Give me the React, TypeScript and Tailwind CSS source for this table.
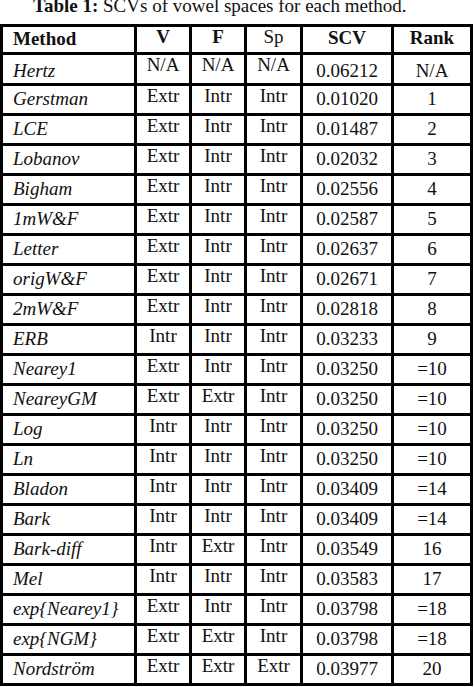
const ROWS: [string, string, string, string, string, string][] = [
  ["Hertz", "N/A", "N/A", "N/A", "0.06212", "N/A"],
  ["Gerstman", "Extr", "Intr", "Intr", "0.01020", "1"],
  ["LCE", "Extr", "Intr", "Intr", "0.01487", "2"],
  ["Lobanov", "Extr", "Intr", "Intr", "0.02032", "3"],
  ["Bigham", "Extr", "Intr", "Intr", "0.02556", "4"],
  ["1mW&F", "Extr", "Intr", "Intr", "0.02587", "5"],
  ["Letter", "Extr", "Intr", "Intr", "0.02637", "6"],
  ["origW&F", "Extr", "Intr", "Intr", "0.02671", "7"],
  ["2mW&F", "Extr", "Intr", "Intr", "0.02818", "8"],
  ["ERB", "Intr", "Intr", "Intr", "0.03233", "9"],
  ["Nearey1", "Extr", "Intr", "Intr", "0.03250", "=10"],
  ["NeareyGM", "Extr", "Extr", "Intr", "0.03250", "=10"],
  ["Log", "Intr", "Intr", "Intr", "0.03250", "=10"],
  ["Ln", "Intr", "Intr", "Intr", "0.03250", "=10"],
  ["Bladon", "Intr", "Intr", "Intr", "0.03409", "=14"],
  ["Bark", "Intr", "Intr", "Intr", "0.03409", "=14"],
  ["Bark-diff", "Intr", "Extr", "Intr", "0.03549", "16"],
  ["Mel", "Intr", "Intr", "Intr", "0.03583", "17"],
  ["exp{Nearey1}", "Extr", "Intr", "Intr", "0.03798", "=18"],
  ["exp{NGM}", "Extr", "Extr", "Intr", "0.03798", "=18"],
  ["Nordström", "Extr", "Extr", "Extr", "0.03977", "20"],
];

export default function App() {
  return (
    <div className="w-[474px] h-[687px] overflow-hidden bg-white text-[#111] font-['Liberation_Serif',serif] text-[19px] leading-none">
      {/* caption, top part cut off in the source */}
      <div className="h-[24px] overflow-hidden pl-[33px]">
        <p className="-mt-[4px] whitespace-nowrap">
          <b>Table 1:</b> SCVs of vowel spaces for each method.
        </p>
      </div>

      <div className="grid w-[473px] grid-cols-[131px_52px_52px_53px_88px_76px] grid-rows-[25px_28px_repeat(20,27px)] gap-[3px] bg-black p-[3px]">
        {/* header */}
        <div className="bg-white pl-[10px] pt-[2px] font-bold">Method</div>
        <div className="bg-white text-center font-bold">V</div>
        <div className="bg-white text-center font-bold">F</div>
        <div className="bg-white text-center">Sp</div>
        <div className="bg-white pt-[1px] text-center font-bold">SCV</div>
        <div className="bg-white pt-[1px] text-center font-bold">Rank</div>

        {ROWS.map((r, i) => {
          const pt = i === 0 ? "pt-[6px]" : "pt-[3px]";
          return [
            <div key={`${i}m`} className={`bg-white pl-[10px] italic whitespace-nowrap ${pt}`}>
              {r[0]}
            </div>,
            <div key={`${i}v`} className="bg-white text-center">{r[1]}</div>,
            <div key={`${i}f`} className="bg-white text-center">{r[2]}</div>,
            <div key={`${i}s`} className="bg-white text-center">{r[3]}</div>,
            <div key={`${i}c`} className={`bg-white text-center ${pt}`}>{r[4]}</div>,
            <div key={`${i}r`} className={`bg-white text-center ${pt}`}>{r[5]}</div>,
          ];
        })}
      </div>
    </div>
  );
}
